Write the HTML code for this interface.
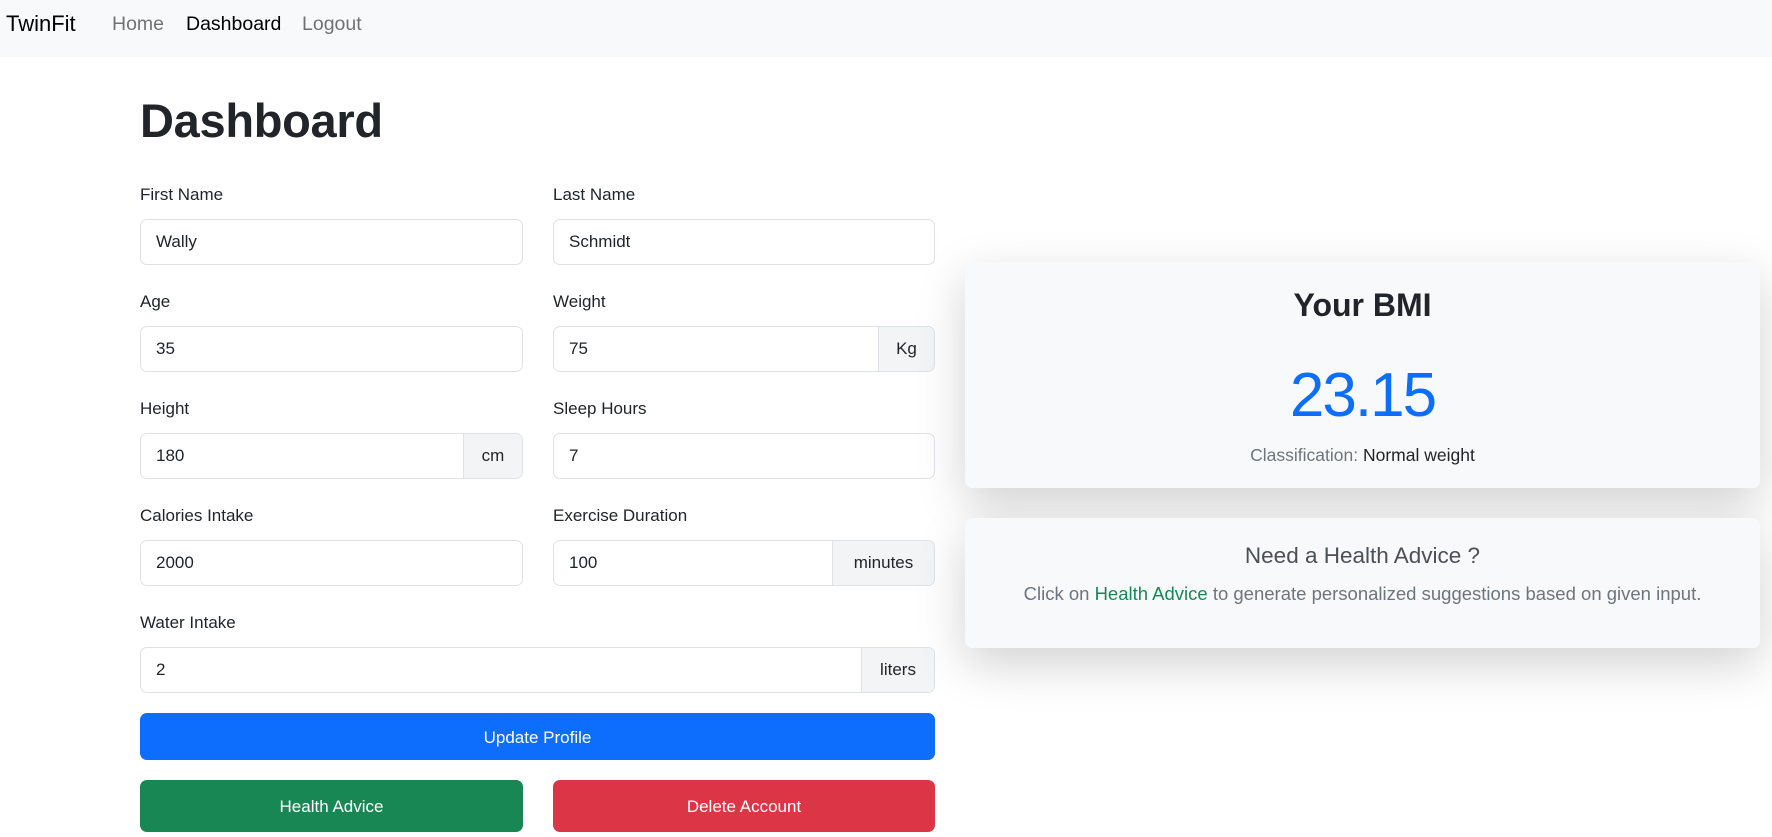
<!DOCTYPE html>
<html><head><meta charset="utf-8"><style>
*{box-sizing:border-box;margin:0;padding:0}
body{width:1772px;height:837px;overflow:hidden;background:#fff;font-family:"Liberation Sans",sans-serif;color:#212529;font-size:17px;position:relative}
.nav{position:absolute;left:0;top:0;width:1772px;height:57px;background:#f8f9fa}
.nav span{position:absolute;top:13px;font-size:19.5px;color:rgba(0,0,0,.55)}
.abs{position:absolute}
h1{position:absolute;left:140px;top:93px;font-size:47px;font-weight:bold;letter-spacing:-0.3px}
.lbl{position:absolute;font-size:17px}
.inp{position:absolute;height:46px;border:1px solid #dee2e6;border-radius:7px;background:#fff;font-size:17px;padding:0 15px;line-height:44px;overflow:hidden}
.add{position:absolute;top:0;right:0;height:44px;background:#f3f4f6;border-left:1px solid #dee2e6;text-align:center;line-height:44px}
.btn{position:absolute;border-radius:7px;color:#fff;text-align:center;font-size:17px}
.card{position:absolute;left:965px;width:795px;background:#f8f9fa;border-radius:7px;box-shadow:0 16px 48px rgba(0,0,0,.18);text-align:center}
</style></head><body>
<div class="nav">
<span style="left:6px;top:11px;font-size:22px;color:#000">TwinFit</span>
<span style="left:112px">Home</span>
<span style="left:186px;color:#000">Dashboard</span>
<span style="left:302px">Logout</span>
</div>
<h1>Dashboard</h1>

<div class="lbl" style="left:140px;top:185px">First Name</div>
<div class="lbl" style="left:553px;top:185px">Last Name</div>
<div class="inp" style="left:140px;top:219px;width:383px">Wally</div>
<div class="inp" style="left:553px;top:219px;width:382px">Schmidt</div>

<div class="lbl" style="left:140px;top:292px">Age</div>
<div class="lbl" style="left:553px;top:292px">Weight</div>
<div class="inp" style="left:140px;top:326px;width:383px">35</div>
<div class="inp" style="left:553px;top:326px;width:382px">75<div class="add" style="width:56px">Kg</div></div>

<div class="lbl" style="left:140px;top:399px">Height</div>
<div class="lbl" style="left:553px;top:399px">Sleep Hours</div>
<div class="inp" style="left:140px;top:433px;width:383px">180<div class="add" style="width:59px">cm</div></div>
<div class="inp" style="left:553px;top:433px;width:382px">7</div>

<div class="lbl" style="left:140px;top:506px">Calories Intake</div>
<div class="lbl" style="left:553px;top:506px">Exercise Duration</div>
<div class="inp" style="left:140px;top:540px;width:383px">2000</div>
<div class="inp" style="left:553px;top:540px;width:382px">100<div class="add" style="width:102px">minutes</div></div>

<div class="lbl" style="left:140px;top:613px">Water Intake</div>
<div class="inp" style="left:140px;top:647px;width:795px">2<div class="add" style="width:73px">liters</div></div>

<div class="btn" style="left:140px;top:713px;width:795px;height:47px;line-height:49px;background:#0d6efd">Update Profile</div>
<div class="btn" style="left:140px;top:780px;width:383px;height:52px;line-height:54px;background:#198754">Health Advice</div>
<div class="btn" style="left:553px;top:780px;width:382px;height:52px;line-height:54px;background:#dc3545">Delete Account</div>

<div class="card" style="top:262px;height:226px">
<div class="abs" style="left:0;right:0;top:25px;font-size:32px;font-weight:bold;">Your BMI</div>
<div class="abs" style="left:0;right:0;top:98px;font-size:62px;font-weight:300;color:#0d6efd;letter-spacing:-2px">23.15</div>
<div class="abs" style="left:0;right:0;top:183px;font-size:17.5px;color:#6c757d">Classification: <span style="color:#212529">Normal weight</span></div>
</div>
<div class="card" style="top:518px;height:130px">
<div class="abs" style="left:0;right:0;top:25px;font-size:22.5px;color:#495057">Need a Health Advice ?</div>
<div class="abs" style="left:0;right:0;top:65px;font-size:18.5px;color:#6c757d">Click on <span style="color:#198754">Health Advice</span> to generate personalized suggestions based on given input.</div>
</div>
</body></html>
